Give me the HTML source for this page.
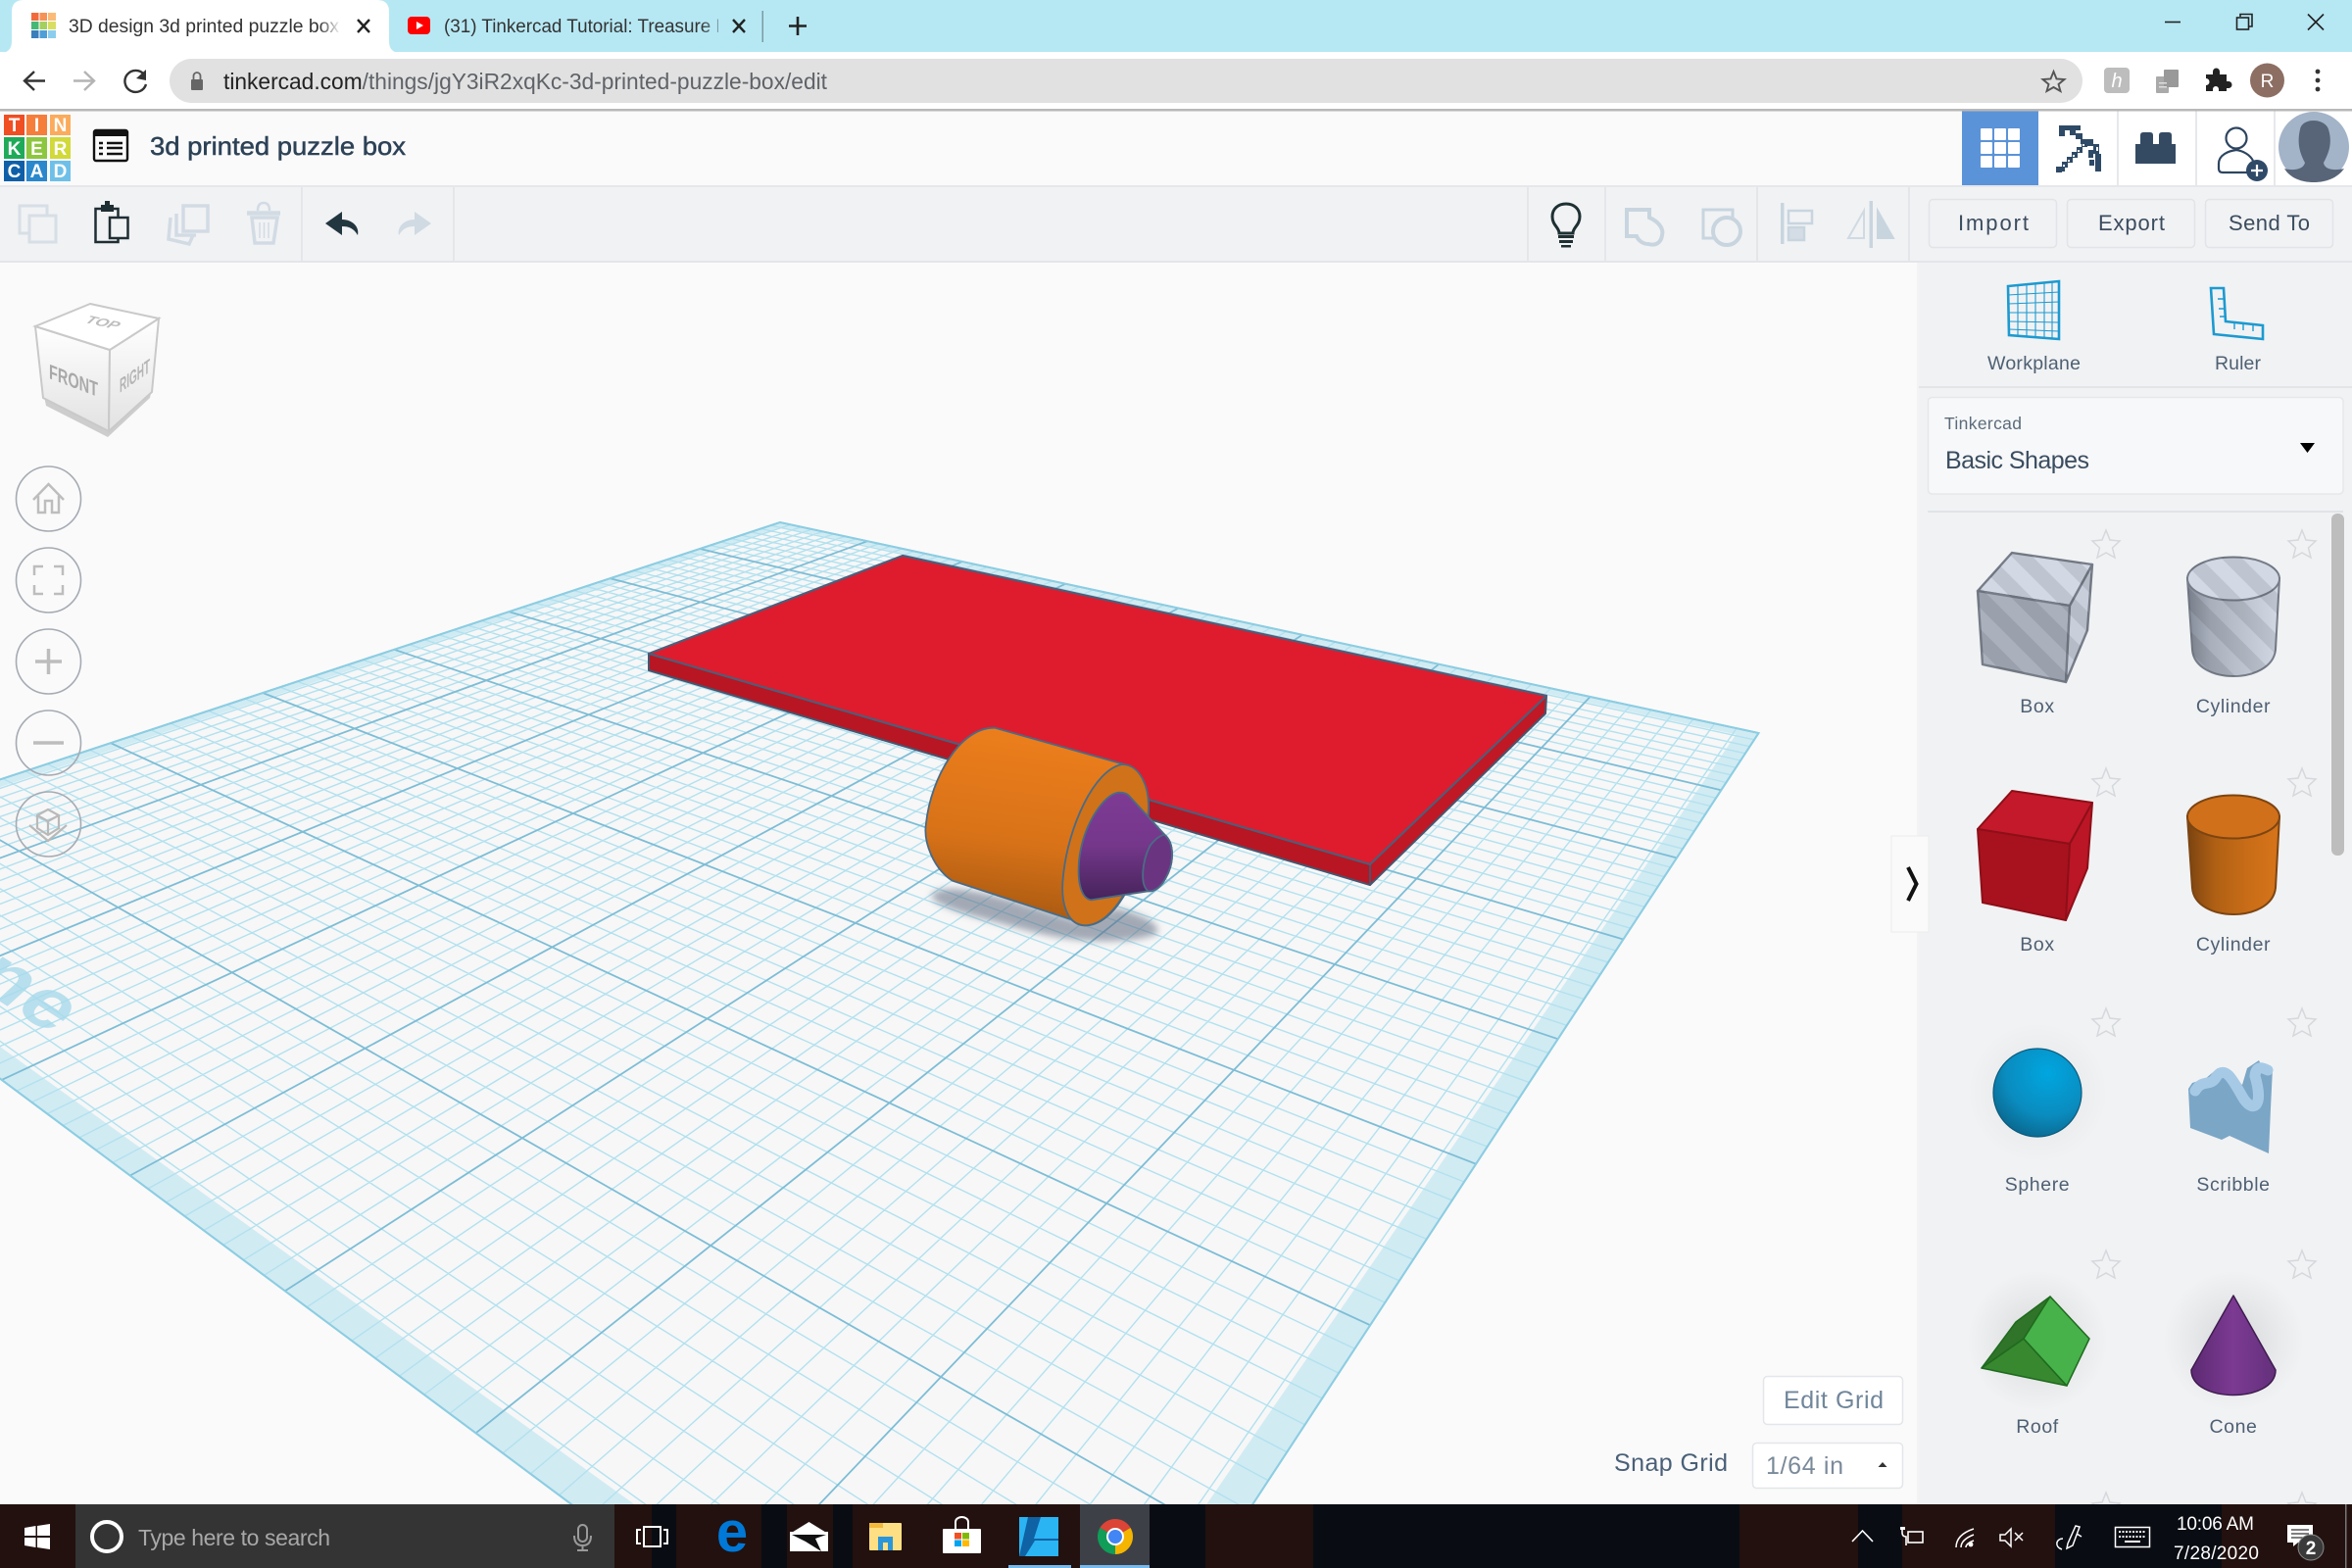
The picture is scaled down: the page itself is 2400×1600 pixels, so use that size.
<!DOCTYPE html>
<html lang="en"><head><meta charset="utf-8"><title>3D design 3d printed puzzle box - Tinkercad</title>
<style>
html,body{margin:0;padding:0;background:#fafafa;width:2400px;height:1600px;overflow:hidden}
svg{display:block;position:absolute;left:0;top:0}
text{font-family:"Liberation Sans",sans-serif}
</style></head>
<body>
<svg width="2400" height="1600" viewBox="0 0 2400 1600" xmlns="http://www.w3.org/2000/svg">
<defs>
<pattern id="st" width="30" height="30" patternUnits="userSpaceOnUse" patternTransform="rotate(-45)"><rect width="15" height="30" fill="#000" opacity=".09"/></pattern>
<linearGradient id="bodyG" x1=".3" y1="0" x2=".15" y2="1"><stop offset="0" stop-color="#ec7e1c"/><stop offset=".55" stop-color="#d87218"/><stop offset="1" stop-color="#a05510"/></linearGradient>
<linearGradient id="coneG" x1="0" y1="0" x2="0" y2="1"><stop offset="0" stop-color="#7e3b95"/><stop offset=".5" stop-color="#74378a"/><stop offset="1" stop-color="#45235a"/></linearGradient>
<linearGradient id="cylO" x1="0" y1="0" x2="1" y2="0"><stop offset="0" stop-color="#7a4310"/><stop offset=".3" stop-color="#b06014"/><stop offset=".7" stop-color="#cb6e18"/><stop offset="1" stop-color="#d6741a"/></linearGradient>
<linearGradient id="cylG" x1="0" y1="0" x2="1" y2="0"><stop offset="0" stop-color="#838a98"/><stop offset=".25" stop-color="#a9b0bc"/><stop offset="1" stop-color="#d2d9e5"/></linearGradient>
<radialGradient id="sph" cx=".62" cy=".28" r=".8"><stop offset="0" stop-color="#00a6e0"/><stop offset=".6" stop-color="#0a8cbf"/><stop offset="1" stop-color="#0a6388"/></radialGradient>
<linearGradient id="coneS" x1="0" y1="0" x2="1" y2="0"><stop offset="0" stop-color="#5c2a72"/><stop offset=".5" stop-color="#7c3a93"/><stop offset="1" stop-color="#63307a"/></linearGradient>
<radialGradient id="halo"><stop offset="0" stop-color="#000" stop-opacity=".11"/><stop offset=".65" stop-color="#000" stop-opacity=".035"/><stop offset="1" stop-color="#000" stop-opacity="0"/></radialGradient>
<linearGradient id="cube" x1="0" y1="0" x2="0" y2="1"><stop offset="0" stop-color="#fff"/><stop offset="1" stop-color="#e2e2e2"/></linearGradient>
<linearGradient id="fade1" x1="0" y1="0" x2="1" y2="0"><stop offset="0" stop-color="#fff" stop-opacity="0"/><stop offset="1" stop-color="#fff"/></linearGradient>
<linearGradient id="fade2" x1="0" y1="0" x2="1" y2="0"><stop offset="0" stop-color="#b6e8f4" stop-opacity="0"/><stop offset="1" stop-color="#b6e8f4"/></linearGradient>
<filter id="blur2" x="-30%" y="-30%" width="160%" height="160%"><feGaussianBlur stdDeviation="11"/></filter>
<symbol id="star" width="28" height="30" viewBox="0 0 28 30" overflow="visible"><path d="M14 1 L18 11 L28 12 L20.5 19 L23 29 L14 24 L5 29 L7.5 19 L0 12 L10 11 Z" fill="none" stroke="#d5d8dc" stroke-width="1.5"/></symbol>
</defs>

<!-- viewport -->
<rect width="2400" height="1600" fill="#fafafa"/>
<polygon points="796,533 1794.5,748 1275,1540 589.8,1540 0,1100.6 0,795.4" fill="#f7f7f7"/>
<path id="band" fill="#b9e4f1" fill-opacity=".62"/>
<path id="minor" fill="none" stroke="#b2e1ef" stroke-width="1.4"/>
<path id="major" fill="none" stroke="#7dbdd6" stroke-width="1.8"/>
<path d="M0 795.4 L796 533 L1794.5 748 L1275 1540 M0 1100.6 L589.8 1540" fill="none" stroke="#8ccde2" stroke-width="2"/>
<text font-size="105" font-weight="700" fill="#a6d9ea" fill-opacity=".78" text-anchor="end" transform="matrix(.7 .45 -.55 .5 53 1056)">ne</text>

<!-- red plate -->
<polygon points="662,667 1398,882 1398,903 662,684" fill="#b81623" stroke="#45566f" stroke-width="2" stroke-linejoin="round"/>
<polygon points="1398,882 1578,710 1577,728 1398,903" fill="#c01825" stroke="#45566f" stroke-width="2" stroke-linejoin="round"/>
<polygon points="662,667 921,567 1578,710 1398,882" fill="#de1c2e" stroke="#4f5d78" stroke-width="2.2" stroke-linejoin="round"/>

<!-- cylinder + cone -->
<g transform="translate(900 700) scale(.3333)">
<path d="M150 640 C190 600 300 620 600 720 L720 680 C800 700 860 730 840 760 C760 790 600 790 450 750 C300 710 160 680 150 640Z" fill="#5c6a80" fill-opacity=".55" filter="url(#blur2)"/>
<g stroke="#4b6b85" stroke-width="5.5" stroke-linejoin="round">
<path d="M345 128 L760 245 C800 270 822 330 815 400 C800 560 720 735 620 733 C605 733 590 725 580 715 L215 596 C160 560 125 480 135 420 C150 280 240 125 345 128 Z" fill="url(#bodyG)"/>
<path d="M735 240 C790 240 822 310 815 390 C800 560 715 735 620 733 C565 730 545 660 555 580 C570 430 650 255 735 240 Z" fill="#d07219"/>
<path d="M725 326 C740 326 750 330 755 335 L865 455 C895 480 895 540 870 585 C855 615 835 630 815 628 L640 655 C610 650 595 600 605 520 C620 420 680 330 725 326Z" fill="url(#coneG)"/>
<path d="M865 455 C895 480 895 540 870 585 C855 615 835 630 815 628 C790 610 795 540 820 490 C835 470 850 458 865 455Z" fill="#6b3481"/>
</g></g>

<!-- view cube -->
<polygon points="47,414 110,446 153,406 155,396 111,432 44,400" fill="#cdcdcd"/>
<polygon points="36,333 112,357 111,440 44,406" fill="url(#cube)" stroke="#c9c9c9" stroke-width="2"/>
<polygon points="112,357 162,325 155,400 111,440" fill="url(#cube)" stroke="#c9c9c9" stroke-width="2"/>
<polygon points="92,310 162,325 112,357 36,333" fill="#fff" stroke="#c9c9c9" stroke-width="2"/>
<text font-size="21" font-weight="700" fill="#a9a9a9" textLength="50" lengthAdjust="spacingAndGlyphs" transform="matrix(1 .38 0 1 50 386)">FRONT</text>
<text font-size="20" font-weight="700" fill="#b5b5b5" textLength="31" lengthAdjust="spacingAndGlyphs" transform="matrix(1 -.7 0 1 122 401)">RIGHT</text>
<text font-size="15" font-weight="700" font-style="italic" fill="#bdbdbd" textLength="33" lengthAdjust="spacingAndGlyphs" transform="matrix(1 .22 -.5 .7 86 329)">TOP</text>

<!-- nav buttons -->
<g fill="none" stroke="#a5abb3" stroke-width="1.6">
<circle cx="49.5" cy="509" r="33"/><circle cx="49.5" cy="592" r="33"/><circle cx="49.5" cy="675" r="33"/><circle cx="49.5" cy="758" r="33"/><circle cx="49.5" cy="841" r="33"/>
</g>
<g fill="none" stroke="#bdbdbd" stroke-width="2.5">
<path d="M34 510 L49.5 494 L65 510 M39 506 V523 H46 V511 H53 V523 H60 V506"/>
<path d="M35 587 V578 H44 M55 578 H64 V587 M35 597 V606 H44 M64 597 V606 H55"/>
</g>
<g fill="none" stroke="#bdbdbd" stroke-width="3.5"><path d="M36 675 H63 M49.5 662 V688"/><path d="M34 758 H65"/></g>
<g fill="none" stroke="#b9b9b9" stroke-width="2"><path d="M49 826 L60 832 V845 L49 852 L38 845 V832 Z M38 832 L49 838 L60 832 M49 838 V852 M30 842 L49 858 L68 842" stroke-width="2.2"/></g>

<!-- Right panel -->
<rect x="1958" y="268" width="442" height="1267" fill="#f1f2f4"/>
<rect x="1956" y="268" width="2" height="1267" fill="#f3f3f4"/>
<g stroke="#1c9ad0" fill="none">
<path d="M2049 292 L2101 287 V346 L2050 342 Z" stroke-width="2.6"/>
<path d="M2049 301 L2101 298 M2049 310 L2101 308 M2049 319 L2101 319 M2050 328 L2101 329 M2050 336 L2101 338 M2059 291 V343 M2068 290 V344 M2077 289 V344 M2086 288 V345 M2094 288 V345" stroke-width="1.1"/>
<path d="M2256 294 H2269 L2271 328 L2309 332 L2309 346 L2259 341 Z" stroke-width="2.6"/>
<path d="M2263 305 H2269 M2264 315 H2270 M2265 323 H2271 M2280 330 V336 M2289 331 V337 M2299 332 V338" stroke-width="1.4"/>
</g>
<text x="2028" y="377" font-size="19.5" fill="#4e6073" textLength="95" lengthAdjust="spacing">Workplane</text>
<text x="2260" y="377" font-size="19.5" fill="#4e6073" textLength="47" lengthAdjust="spacing">Ruler</text>
<rect x="1958" y="394" width="442" height="2" fill="#e3e5e8"/>
<rect x="1967.5" y="405.5" width="423.5" height="98.5" rx="4" fill="#f7f8f9" stroke="#e5e7ea" stroke-width="1.5"/>
<text x="1984" y="438" font-size="17.5" fill="#5b6b7b" textLength="79" lengthAdjust="spacing">Tinkercad</text>
<text x="1985" y="478" font-size="25" fill="#3a4d60" textLength="147" lengthAdjust="spacing">Basic Shapes</text>
<polygon points="2347,452 2362,452 2354.5,462" fill="#000"/>
<rect x="1967" y="521" width="424" height="2" fill="#dfe4e8"/>
<rect x="2379" y="524" width="13" height="349" rx="6" fill="#bdbdbd"/>

<use href="#star" x="2135" y="540"/><use href="#star" x="2335" y="540"/>
<use href="#star" x="2135" y="783"/><use href="#star" x="2335" y="783"/>
<use href="#star" x="2135" y="1028"/><use href="#star" x="2335" y="1028"/>
<use href="#star" x="2135" y="1275"/><use href="#star" x="2335" y="1275"/>
<use href="#star" x="2135" y="1522"/><use href="#star" x="2335" y="1522"/>

<!-- gray box -->
<g stroke="#767d88" stroke-width="2.4" stroke-linejoin="round">
<polygon points="2053,564 2135,576 2112,618 2018,603" fill="#d2d9e5"/>
<polygon points="2018,603 2112,618 2108,696 2023,678" fill="#aab1bd"/>
<polygon points="2112,618 2135,576 2130,643 2108,696" fill="#c8cfdb"/>
</g>
<polygon points="2053,564 2135,576 2112,618 2018,603" fill="url(#st)"/>
<polygon points="2018,603 2112,618 2108,696 2023,678" fill="url(#st)"/>
<polygon points="2112,618 2135,576 2130,643 2108,696" fill="url(#st)"/>
<!-- gray cylinder -->
<g stroke="#767d88" stroke-width="2">
<path d="M2232 590 L2237 663 C2240 699 2318 699 2322 663 L2326 590 Z" fill="url(#cylG)"/>
<ellipse cx="2279" cy="590.5" rx="47" ry="22" fill="#d2d9e5"/>
</g>
<path d="M2232 590 L2237 663 C2240 699 2318 699 2322 663 L2326 590 A47 22 0 1 0 2232 590Z" fill="url(#st)"/>
<text x="2079" y="727" font-size="19.5" fill="#4e6073" text-anchor="middle" letter-spacing=".6">Box</text>
<text x="2279" y="727" font-size="19.5" fill="#4e6073" text-anchor="middle" letter-spacing=".6">Cylinder</text>

<!-- red box -->
<g stroke="#8d0f18" stroke-width="2" stroke-linejoin="round">
<polygon points="2053,807 2135,819 2112,861 2018,846" fill="#c4192b"/>
<polygon points="2018,846 2112,861 2108,939 2023,921" fill="#a8121e"/>
<polygon points="2112,861 2135,819 2130,886 2108,939" fill="#bb1626"/>
</g>
<!-- orange cylinder -->
<g stroke="#7d4512" stroke-width="2">
<path d="M2232 833 L2237 906 C2240 942 2318 942 2322 906 L2326 833 Z" fill="url(#cylO)"/>
<ellipse cx="2279" cy="833.5" rx="47" ry="22" fill="#d1701a"/>
</g>
<text x="2079" y="970" font-size="19.5" fill="#4e6073" text-anchor="middle" letter-spacing=".6">Box</text>
<text x="2279" y="970" font-size="19.5" fill="#4e6073" text-anchor="middle" letter-spacing=".6">Cylinder</text>

<!-- sphere -->
<circle cx="2079" cy="1115" r="72" fill="url(#halo)" opacity=".6"/>
<ellipse cx="2079" cy="1115" rx="45" ry="45" fill="url(#sph)" stroke="#0b5b7d" stroke-width="1.2"/>
<!-- scribble -->
<polygon points="2233,1111 2235,1151 2267,1163 2275,1159 2315,1177 2317,1131 2319,1090 2308,1088 2305,1082 2293,1090 2288,1107 2275,1094 2263,1090 2250,1101 2237,1105" fill="#7ba6c6"/>
<path d="M2240 1113 C2248 1100 2256 1110 2262 1098 C2272 1086 2280 1106 2290 1122 C2300 1136 2310 1128 2301 1098 C2302 1086 2310 1090 2314 1092" fill="none" stroke="#a6cae6" stroke-width="11" stroke-linecap="round"/>
<text x="2079" y="1215" font-size="19.5" fill="#4e6073" text-anchor="middle" letter-spacing=".6">Sphere</text>
<text x="2279" y="1215" font-size="19.5" fill="#4e6073" text-anchor="middle" letter-spacing=".6">Scribble</text>

<!-- roof -->
<circle cx="2079" cy="1368" r="72" fill="url(#halo)"/>
<g stroke-linejoin="round" stroke="#1f6a1f" stroke-width="1.5">
<polygon points="2092,1323 2065,1366 2022,1396 2057,1349" fill="#2f7428"/>
<polygon points="2022,1396 2065,1366 2109,1414" fill="#37882f"/>
<polygon points="2092,1323 2132,1366 2109,1414 2065,1366" fill="#47b24a"/>
</g>
<!-- cone -->
<circle cx="2279" cy="1368" r="72" fill="url(#halo)"/>
<path d="M2279 1322 L2236 1398 C2236 1432 2322 1432 2322 1398 Z" fill="url(#coneS)" stroke="#3f1c50" stroke-width="1.5" stroke-linejoin="round"/>
<text x="2079" y="1462" font-size="19.5" fill="#4e6073" text-anchor="middle" letter-spacing=".6">Roof</text>
<text x="2279" y="1462" font-size="19.5" fill="#4e6073" text-anchor="middle" letter-spacing=".6">Cone</text>

<!-- panel toggle -->
<rect x="1930" y="853" width="38" height="98" fill="#fafafa" stroke="#ececee" stroke-width="1"/>
<path d="M1947 885 L1955.5 902 L1947 919" fill="none" stroke="#111" stroke-width="4"/>

<!-- bottom right controls -->
<rect x="1799.5" y="1404.5" width="142" height="49" rx="4" fill="#fff" stroke="#e3e6ea" stroke-width="1.5"/>
<text x="1820" y="1437" font-size="25" fill="#71869b" textLength="102" lengthAdjust="spacing">Edit Grid</text>
<text x="1647" y="1501" font-size="25" fill="#4a6078" textLength="116" lengthAdjust="spacing">Snap Grid</text>
<rect x="1788.5" y="1472.5" width="153" height="46" rx="4" fill="#fff" stroke="#e3e6ea" stroke-width="1.5"/>
<text x="1802" y="1504" font-size="25" fill="#7a8a9a" textLength="79" lengthAdjust="spacing">1/64 in</text>
<polygon points="1921,1492 1925.5,1497 1916.5,1497" fill="#333"/>

<!-- toolbar -->
<rect y="190" width="2400" height="77" fill="#f1f2f4"/>
<rect y="266" width="2400" height="2" fill="#e3e5e9"/>
<g fill="#e4e6ea"><rect x="307" y="190" width="2" height="76"/><rect x="462" y="190" width="2" height="76"/><rect x="1558" y="190" width="2" height="76"/><rect x="1637" y="190" width="2" height="76"/><rect x="1792" y="190" width="2" height="76"/><rect x="1947" y="190" width="2" height="76"/></g>
<!-- copy -->
<g fill="none" stroke="#d7dfe6" stroke-width="3"><path d="M30 238 H20 V210 H48 V220"/><rect x="30" y="220" width="27" height="27" fill="#f1f2f4"/></g>
<!-- paste -->
<g fill="none" stroke="#1f2e33" stroke-width="2.5"><rect x="97.5" y="213" width="23" height="34"/><rect x="112" y="222" width="18.5" height="21" fill="#f1f2f4"/></g>
<rect x="103" y="209" width="13" height="7" fill="#1f2e33"/><rect x="107" y="205" width="5" height="5" fill="#1f2e33"/>
<!-- duplicate -->
<g fill="none" stroke="#d2dbe4" stroke-width="3.5"><path d="M174 222 L172 244 L193 249 L197 240"/><path d="M180 218 V240 H200"/><rect x="187" y="210" width="25" height="26" fill="#f1f2f4"/></g>
<!-- trash -->
<g fill="none" stroke="#d2dbe4"><path d="M257 222 L260 248 H279 L283 222 Z" stroke-width="3.5"/><path d="M252 217.5 H286" stroke-width="4.5"/><path d="M263 215 Q263 207 269 207 Q275 207 275 215" stroke-width="2.5"/><path d="M265 227 V243 M269.5 227 V243 M274 227 V243" stroke-width="1.5"/></g>
<!-- undo/redo -->
<path d="M332 228 L349 216 V224 C360 224 367 232 365 240 C361 233 356 231 349 231 V240 Z" fill="#22363f"/>
<path d="M440 228 L423 216 V224 C412 224 405 232 407 240 C411 233 416 231 423 231 V240 Z" fill="#d0dae3"/>
<!-- bulb -->
<path d="M1591 238 C1591 232 1584 230 1584 221 C1584 213 1590 208 1598 208 C1606 208 1612 213 1612 221 C1612 230 1605 232 1605 238 Z" fill="none" stroke="#1e3033" stroke-width="3"/>
<rect x="1590" y="240" width="16" height="3" fill="#1e3033"/><rect x="1591" y="245" width="14" height="3" fill="#1e3033"/><rect x="1593" y="250" width="10" height="2.5" fill="#1e3033"/>
<!-- group / ungroup -->
<g fill="none" stroke="#c8d5df" stroke-width="4">
<path d="M1660 214 H1683 V222 C1692 226 1698 233 1696 240 C1695 248 1689 251 1682 249 C1677 249 1672 246 1670 241 H1660 Z"/>
<rect x="1738" y="214" width="30" height="29" stroke-width="3"/><circle cx="1762" cy="236" r="14" fill="#f1f2f4"/>
</g>
<!-- align / mirror -->
<rect x="1817" y="207" width="3.5" height="42" fill="#c8d5df"/>
<rect x="1825" y="215" width="24" height="13" fill="none" stroke="#c8d5df" stroke-width="2.5"/>
<rect x="1825" y="232" width="16" height="13" fill="#d4dde5" stroke="#c8d5df" stroke-width="2.5"/>
<rect x="1907.5" y="205" width="3.5" height="48" fill="#c8d5df"/>
<polygon points="1902,215 1902,243 1886,243" fill="none" stroke="#d0dae3" stroke-width="2"/>
<polygon points="1916,215 1916,243 1932,243" fill="#c8d5df" stroke="#c8d5df" stroke-width="2"/>
<!-- buttons -->
<g fill="#f1f2f4" stroke="#e2e4e8" stroke-width="1.5"><rect x="1968.5" y="203.5" width="130" height="49" rx="4"/><rect x="2109.5" y="203.5" width="130" height="49" rx="4"/><rect x="2250.5" y="203.5" width="130" height="49" rx="4"/></g>
<g font-size="22" fill="#3b4c5e"><text x="1998" y="235" textLength="72" lengthAdjust="spacing">Import</text><text x="2141" y="235" textLength="68" lengthAdjust="spacing">Export</text><text x="2274" y="235" textLength="83" lengthAdjust="spacing">Send To</text></g>

<!-- header -->
<rect y="113" width="2400" height="77" fill="#fafafa"/>
<rect y="189" width="2400" height="2" fill="#e6e7ea"/>
<rect x="2080" y="113" width="320" height="76" fill="#fff"/>
<rect x="2002" y="113" width="78" height="76" fill="#5b93d8"/>
<g fill="#fff"><rect x="2021" y="131" width="12" height="12" rx="1"/><rect x="2035" y="131" width="12" height="12" rx="1"/><rect x="2049" y="131" width="12" height="12" rx="1"/><rect x="2021" y="145" width="12" height="12" rx="1"/><rect x="2035" y="145" width="12" height="12" rx="1"/><rect x="2049" y="145" width="12" height="12" rx="1"/><rect x="2021" y="159" width="12" height="12" rx="1"/><rect x="2035" y="159" width="12" height="12" rx="1"/><rect x="2049" y="159" width="12" height="12" rx="1"/></g>
<g fill="#e6e8eb"><rect x="2160" y="113" width="2" height="76"/><rect x="2240" y="113" width="2" height="76"/><rect x="2320" y="113" width="2" height="76"/></g>
<!-- pickaxe (pixel art) -->
<path fill="#2e4a66" d="M2101 128h22v5h-22zM2101 133h6v6h-6zM2112 133h6v5h-6zM2118 136h7v6h-7zM2123 142h7v5h-7zM2130 142h6v7h-6zM2136 147h6v10h-6zM2131 153h5v8h-5zM2138 157h6v18h-6zM2132 163h5v6h-5zM2124 144h6v6h-6zM2119 150h6v6h-6zM2114 155h6v6h-6zM2109 160h6v6h-6zM2104 165h6v6h-6zM2098 170h6v6h-6zM2103 171h4v4h-4z"/>
<path fill="#fff" d="M2107 133h5v3h-5zM2139 150h2v4h-2zM2125 147h2v2h-2zM2120 153h2v2h-2zM2115 158h2v2h-2zM2110 163h2v2h-2zM2105 168h2v2h-2z"/>
<!-- brick -->
<path d="M2179 147 H2184 V138 Q2184 135 2187 135 H2194 Q2197 135 2197 138 V147 H2203 V138 Q2203 135 2206 135 H2213 Q2216 135 2216 138 V147 H2220 V167 H2179 Z" fill="#344a63"/>
<!-- user plus -->
<g fill="none" stroke="#2e4560" stroke-width="2.2"><circle cx="2282" cy="141" r="10.5"/><path d="M2296 176 H2268 Q2264 176 2264 172 V167 C2264 158 2274 154 2282 153 C2289 154 2296 158 2299 164"/></g>
<circle cx="2303" cy="174" r="11" fill="#2f4a68"/><path d="M2303 168 V180 M2297 174 H2309" stroke="#fff" stroke-width="2.2"/>
<!-- avatar -->
<ellipse cx="2361" cy="150" rx="36" ry="36" fill="#a3b3c8"/>
<path d="M2347 132 C2349 120 2372 120 2376 132 C2380 145 2377 155 2371 166 C2372 174 2384 174 2392 172 C2385 182 2373 186 2361 186 C2349 186 2337 182 2331 172 C2338 174 2350 174 2352 166 C2346 155 2344 145 2347 132Z" fill="#586579"/>
<!-- logo -->
<g><rect x="4" y="117" width="21" height="21" fill="#f04e23"/><rect x="27" y="117" width="21" height="21" fill="#f57e3b"/><rect x="51" y="117" width="21" height="21" fill="#fbab5c"/>
<rect x="4" y="140" width="21" height="22" fill="#1faa59"/><rect x="27" y="140" width="21" height="22" fill="#8dc63f"/><rect x="51" y="140" width="21" height="22" fill="#d1d93b"/>
<rect x="4" y="164" width="21" height="21" fill="#0f5fa8"/><rect x="27" y="164" width="21" height="21" fill="#2a88cc"/><rect x="51" y="164" width="21" height="21" fill="#6fc0e8"/></g>
<g font-size="19" font-weight="700" fill="#fff" text-anchor="middle"><text x="14.5" y="134">T</text><text x="37.5" y="134">I</text><text x="61.5" y="134">N</text><text x="14.5" y="158">K</text><text x="37.5" y="158">E</text><text x="61.5" y="158">R</text><text x="14.5" y="181">C</text><text x="37.5" y="181">A</text><text x="61.5" y="181">D</text></g>
<!-- list icon -->
<rect x="96" y="133" width="34" height="31" rx="2" fill="none" stroke="#111" stroke-width="2.4"/><rect x="96" y="133" width="34" height="6" fill="#111"/>
<path d="M101 146 H105 M109 146 H125 M101 151 H105 M109 151 H125 M101 157 H105 M109 157 H125" stroke="#111" stroke-width="2.6"/>
<text x="153" y="158" font-size="26" fill="#2d4257" stroke="#2d4257" stroke-width=".5" textLength="261" lengthAdjust="spacingAndGlyphs">3d printed puzzle box</text>

<!-- chrome -->
<rect width="2400" height="54" fill="#b6e8f4"/>
<rect y="53" width="2400" height="58" fill="#fff"/>
<rect y="111" width="2400" height="2.5" fill="#b8b8b8"/>
<path d="M0 54 Q12 54 12 42 V12 Q12 0 24 0 H385 Q397 0 397 12 V42 Q397 54 409 54 Z" fill="#fff"/>
<g><rect x="32" y="13" width="7.5" height="8" fill="#f26a3c"/><rect x="40.5" y="13" width="7.5" height="8" fill="#f79257"/><rect x="49" y="13" width="8" height="8" fill="#fbbb78"/><rect x="32" y="22" width="7.5" height="8" fill="#45b776"/><rect x="40.5" y="22" width="7.5" height="8" fill="#a3d05f"/><rect x="49" y="22" width="8" height="8" fill="#d8de62"/><rect x="32" y="31" width="7.5" height="8" fill="#3a7ebb"/><rect x="40.5" y="31" width="7.5" height="8" fill="#509ed6"/><rect x="49" y="31" width="8" height="8" fill="#8ccdee"/></g>
<text x="70" y="33" font-size="19" fill="#333" textLength="276" lengthAdjust="spacingAndGlyphs">3D design 3d printed puzzle box</text>
<rect x="326" y="12" width="22" height="30" fill="url(#fade1)"/>
<path d="M365 20 L377 33 M377 20 L365 33" stroke="#222" stroke-width="2.4"/>
<rect x="416" y="17" width="23" height="18" rx="4" fill="#f00"/><polygon points="425,22 425,30 432,26" fill="#fff"/>
<text x="453" y="33" font-size="19" fill="#333" textLength="290" lengthAdjust="spacingAndGlyphs">(31) Tinkercad Tutorial: Treasure B</text>
<rect x="715" y="12" width="30" height="30" fill="url(#fade2)"/><rect x="733" y="12" width="12" height="30" fill="#b6e8f4"/>
<path d="M748 20 L760 33 M760 20 L748 33" stroke="#222" stroke-width="2.4"/>
<rect x="777.5" y="11" width="1.5" height="32" fill="#7a9aa2"/>
<path d="M814 17 V36 M805 26.5 H823" stroke="#222" stroke-width="2.6"/>
<path d="M2209 22.5 H2225" stroke="#222" stroke-width="1.6"/>
<path d="M2286 17 V14.5 H2298 V27 H2294" fill="none" stroke="#222" stroke-width="1.6"/><rect x="2282.5" y="18" width="12" height="12" fill="none" stroke="#222" stroke-width="1.6"/>
<path d="M2355 14.5 L2371 30.5 M2371 14.5 L2355 30.5" stroke="#222" stroke-width="1.6"/>
<path d="M46 82.5 H26 M35 73 L25 82.5 L35 92" fill="none" stroke="#333" stroke-width="2.4"/>
<path d="M75 82.5 H95 M86 73 L96 82.5 L86 92" fill="none" stroke="#b4b4b4" stroke-width="2.4"/>
<path d="M147 76 A11 11 0 1 0 149 86" fill="none" stroke="#333" stroke-width="2.4"/><polygon points="149,71 149,82 139,80" fill="#333"/>
<rect x="173" y="60" width="1952" height="45" rx="22.5" fill="#e1e1e1"/>
<rect x="195" y="81" width="12" height="11" rx="1" fill="#666"/><path d="M197.5 81 V77.5 A3.5 3.5 0 0 1 204.5 77.5 V81" fill="none" stroke="#666" stroke-width="1.8"/>
<text x="228" y="91" font-size="23" fill="#5f6368" textLength="616" lengthAdjust="spacingAndGlyphs"><tspan fill="#222">tinkercad.com</tspan>/things/jgY3iR2xqKc-3d-printed-puzzle-box/edit</text>
<path d="M2095.5 73 L2098.5 80.5 L2106.5 81 L2100.5 86 L2102.5 93 L2095.5 89 L2088.5 93 L2090.5 86 L2084.5 81 L2092.5 80.5 Z" fill="none" stroke="#555" stroke-width="1.9"/>
<rect x="2147" y="69" width="26" height="26" rx="4" fill="#bdbdbd"/><text x="2160" y="89" font-size="20" font-style="italic" fill="#fff" text-anchor="middle">h</text>
<rect x="2200" y="78" width="13" height="17" rx="1" fill="#aaa"/><rect x="2208" y="71" width="15" height="18" rx="1" fill="#999"/><rect x="2203" y="84" width="8" height="1.5" fill="#ddd"/><rect x="2203" y="88" width="8" height="1.5" fill="#ddd"/>
<path d="M2251 76 H2258 V73 A3.5 3.5 0 0 1 2265 73 V76 H2272 V83 H2274 A3.5 3.5 0 0 1 2274 90 H2272 V93 H2264 V91 A3 3 0 0 0 2258 91 V93 H2251 V87 A3.5 3.5 0 0 0 2251 80 Z" fill="#222"/>
<circle cx="2313.5" cy="82" r="17.5" fill="#8d6e63"/><text x="2313.5" y="89" font-size="19" fill="#fff" text-anchor="middle">R</text>
<g fill="#333"><circle cx="2365" cy="73" r="2.4"/><circle cx="2365" cy="82" r="2.4"/><circle cx="2365" cy="91" r="2.4"/></g>

<!-- taskbar -->
<rect y="1535" width="2400" height="65" fill="#0a0c13"/>
<g fill="#22110f"><rect x="0" y="1535" width="77" height="65"/><rect x="627" y="1535" width="38" height="65"/><rect x="690" y="1535" width="87" height="65"/><rect x="803" y="1535" width="47" height="65"/><rect x="870" y="1535" width="232" height="65"/><rect x="1230" y="1535" width="110" height="65"/><rect x="1775" y="1535" width="121" height="65"/><rect x="1941" y="1535" width="156" height="65"/><rect x="2267" y="1535" width="133" height="65"/></g>
<rect x="77" y="1535" width="550" height="65" fill="#343434"/>
<rect x="1102" y="1535" width="71" height="65" fill="#3d4147"/>
<rect x="1029" y="1597" width="64" height="3" fill="#76b9ed"/><rect x="1102" y="1597" width="71" height="3" fill="#76b9ed"/>
<rect x="2393" y="1535" width="1.5" height="65" fill="#777"/>
<polygon points="25,1559 36.5,1557 36.5,1567 25,1567" fill="#fff"/><polygon points="38,1557 51,1555 51,1567 38,1567" fill="#fff"/><polygon points="25,1569 36.5,1569 36.5,1579 25,1577" fill="#fff"/><polygon points="38,1569 51,1569 51,1581 38,1579" fill="#fff"/>
<circle cx="109" cy="1568" r="15" fill="none" stroke="#fff" stroke-width="4"/>
<text x="141" y="1577" font-size="23" fill="#a8a8a8" textLength="196" lengthAdjust="spacing">Type here to search</text>
<g fill="none" stroke="#9a9a9a" stroke-width="2"><rect x="590" y="1556" width="9" height="17" rx="4.5"/><path d="M586 1567 Q586 1577 594.5 1577 Q603 1577 603 1567 M594.5 1577 V1582 M589 1582 H600"/></g>
<g fill="none" stroke="#fff" stroke-width="2"><rect x="657" y="1558" width="17" height="20"/><path d="M654 1561 H650 V1575 H654 M677 1561 H681 V1575 H677"/></g>
<text x="747" y="1583" font-size="58" font-weight="700" fill="#0078d7" text-anchor="middle">e</text>
<rect x="806" y="1563" width="39" height="20" fill="#fff"/><polygon points="825.5,1553 845,1565 806,1565" fill="#fff"/><polygon points="808,1566 843,1566 832,1570 838,1583 822,1573" fill="#111"/>
<rect x="887" y="1554" width="33" height="28" rx="1" fill="#ffdf84"/><rect x="887" y="1554" width="14" height="5" fill="#f2b93d"/><path d="M896 1582 V1568 H911 V1582 H906 V1574 H901 V1582 Z" fill="#2b95d9"/>
<rect x="962" y="1560" width="39" height="25" rx="1" fill="#fff"/><path d="M975 1560 V1553 A6.5 5 0 0 1 988 1553 V1560" fill="none" stroke="#fff" stroke-width="2"/>
<rect x="974" y="1564" width="7" height="6.5" fill="#f25022"/><rect x="982" y="1564" width="7" height="6.5" fill="#7fba00"/><rect x="974" y="1571.5" width="7" height="6.5" fill="#00a4ef"/><rect x="982" y="1571.5" width="7" height="6.5" fill="#ffb900"/>
<rect x="1040" y="1548" width="40" height="40" fill="#2ab4f4"/><path d="M1049 1548 L1040 1588 H1046 L1056 1572 H1080 V1570 H1055 L1062 1548 Z" fill="#0f62a3"/>
<g><path d="M1122.4 1559 A18 18 0 0 1 1153.6 1559 L1138 1568Z" fill="#db4437"/><path d="M1153.6 1559 A18 18 0 0 1 1138 1586 L1138 1568Z" fill="#f4b400"/><path d="M1138 1586 A18 18 0 0 1 1122.4 1559 L1138 1568Z" fill="#0f9d58"/><circle cx="1138" cy="1568" r="9" fill="#fff"/><circle cx="1138" cy="1568" r="7" fill="#4285f4"/></g>
<path d="M1890 1573 L1900.5 1562 L1911 1573" fill="none" stroke="#fff" stroke-width="1.6"/>
<g fill="none" stroke="#fff" stroke-width="1.6"><rect x="1947" y="1563" width="15" height="11"/><path d="M1941 1558 V1564 Q1941 1568 1945 1568 V1577"/></g><rect x="1939" y="1558" width="5" height="3" fill="#fff"/>
<g fill="none" stroke="#fff" stroke-width="1.5"><path d="M1996 1579 Q1996 1566 2014 1560 M2001 1579 Q2001 1571 2014 1566 M2006 1579 Q2006 1575 2014 1572"/></g><circle cx="2011" cy="1576" r="2.4" fill="#fff"/>
<path d="M2041 1566 H2046 L2052 1560 V1578 L2046 1572 H2041 Z" fill="none" stroke="#fff" stroke-width="1.5"/><path d="M2056 1564 L2064 1572 M2064 1564 L2056 1572" stroke="#fff" stroke-width="1.5"/>
<path d="M2104 1581 C2096 1578 2098 1570 2105 1570 M2110 1575 L2118 1557 L2122 1558 L2115 1577 L2109 1580 Z M2119 1565 L2124 1568" fill="none" stroke="#fff" stroke-width="1.5"/>
<rect x="2158.5" y="1558.5" width="35" height="20" fill="none" stroke="#fff" stroke-width="1.5"/><path d="M2162 1563 H2190 M2162 1568 H2190" stroke="#fff" stroke-width="2" stroke-dasharray="2 1.5"/><path d="M2168 1573 H2184" stroke="#fff" stroke-width="2"/>
<text x="2221" y="1561" font-size="19" fill="#fff" textLength="79" lengthAdjust="spacing">10:06 AM</text>
<text x="2218" y="1591" font-size="19" fill="#fff" textLength="87" lengthAdjust="spacing">7/28/2020</text>
<path d="M2334 1556 H2360 V1574 H2345 L2340 1578 V1574 H2334 Z" fill="#fff"/><path d="M2338 1561 H2356 M2338 1565 H2356 M2338 1569 H2350" stroke="#333" stroke-width="1.2"/>
<circle cx="2358" cy="1579" r="13" fill="#3a3a3a" stroke="#888" stroke-width="1"/><text x="2358" y="1586" font-size="19" font-weight="700" fill="#fff" text-anchor="middle">2</text>
</svg>
<script>
(function(){
var P=function(u,v){var w=1-.31307*u-.42622*v;return [(436.7*u-958.95*v+796)/w,(-19.2*u-22.9*v+533)/w]};
var F=function(p){return p[0].toFixed(1)+' '+p[1].toFixed(1)};
function seg(a,b){var t0=0,t1=1,dx=b[0]-a[0],dy=b[1]-a[1],c=[[-dx,a[0]+2],[dy,1540-a[1]]],i,p,q,r;
 for(i=0;i<2;i++){p=c[i][0];q=c[i][1];if(p==0){if(q<0)return ''}else{r=q/p;if(p<0){if(r>t0)t0=r}else{if(r<t1)t1=r}}}
 if(t0>t1)return '';
 return 'M'+F([a[0]+t0*dx,a[1]+t0*dy])+'L'+F([a[0]+t1*dx,a[1]+t1*dy])}
function sh(p,ax,lim,s){var o=[],n=p.length,i,a,b,ia,ib,t;for(i=0;i<n;i++){a=p[i];b=p[(i+1)%n];ia=s*(a[ax]-lim)<=0;ib=s*(b[ax]-lim)<=0;if(ia)o.push(a);if(ia!=ib){t=(lim-a[ax])/(b[ax]-a[ax]);o.push([a[0]+t*(b[0]-a[0]),a[1]+t*(b[1]-a[1])])}}return o}
var q=function(a,c,d,e){var g=sh(sh([P(a,c),P(d,c),P(d,e),P(a,e)],1,1540,1),0,-2,-1);if(!g.length)return '';return 'M'+g.map(F).join('L')+'Z'};
var mi='',ma='',i,t;
for(i=0;i<=64;i++){t=i/64;var s=seg(P(t,0),P(t,1))+seg(P(0,t),P(1,t));if(i%8==0){ma+=s}else{mi+=s}}
var k=.85/64;
document.getElementById('band').setAttribute('d',q(0,0,k,1)+q(1-k,0,1,1)+q(k,0,1-k,k)+q(k,1-k,1-k,1));
document.getElementById('minor').setAttribute('d',mi);
document.getElementById('major').setAttribute('d',ma);
})();
</script>
</body></html>
